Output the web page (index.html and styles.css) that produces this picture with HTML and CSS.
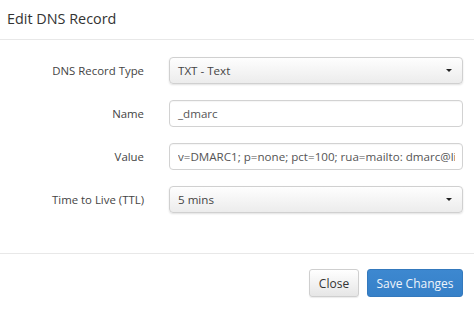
FILE: index.html
```html
<!DOCTYPE html>
<html>
<head>
<meta charset="utf-8">
<link rel="stylesheet" href="styles.css">
</head>
<body>
<div class="modal">
  <div class="modal-header">
    <h4 class="modal-title">Edit DNS Record</h4>
  </div>
  <div class="modal-body">
    <div class="form-row">
      <label class="label">DNS Record Type</label>
      <div class="control select"><span>TXT - Text</span><span class="caret"></span></div>
    </div>
    <div class="form-row">
      <label class="label">Name</label>
      <div class="control input"><span>_dmarc</span></div>
    </div>
    <div class="form-row">
      <label class="label">Value</label>
      <div class="control input"><span class="clip">v=DMARC1; p=none; pct=100; rua=mailto: dmarc@li</span></div>
    </div>
    <div class="form-row">
      <label class="label">Time to Live (TTL)</label>
      <div class="control select"><span>5 mins</span><span class="caret"></span></div>
    </div>
  </div>
  <div class="modal-footer">
    <button class="btn btn-default">Close</button>
    <button class="btn btn-primary">Save Changes</button>
  </div>
</div>
</body>
</html>
```

FILE: styles.css
```css
html, body {
  margin: 0;
  padding: 0;
  background: #fff;
}
body {
  font-family: "Open Sans", "DejaVu Sans", sans-serif;
  color: #444;
  width: 474px;
  height: 309px;
  overflow: hidden;
}
.modal-header {
  height: 40px;
  box-sizing: border-box;
  border-bottom: 1px solid #e8e8e8;
  padding: 0 7px;
  display: flex;
  align-items: center;
}
.modal-title {
  margin: 0;
  font-size: 14.4px;
  font-weight: 400;
  color: #333;
  position: relative;
  top: -1px;
}
.modal-body {
  padding: 17px 11px 40px 0;
  display: flex;
  flex-direction: column;
  gap: 16px;
}
.form-row {
  display: flex;
  align-items: center;
  gap: 25px;
}
.label {
  width: 144px;
  text-align: right;
  font-size: 11.4px;
  color: #444;
}
.control {
  flex: 1;
  min-width: 0;
  height: 27px;
  box-sizing: border-box;
  border: 1px solid #d2d2d2;
  border-radius: 4px;
  display: flex;
  align-items: center;
  padding: 0 7px 0 8px;
  font-size: 11.6px;
  color: #555;
  overflow: hidden;
  white-space: nowrap;
}
.input {
  background: #fff;
  box-shadow: inset 0 1px 1px rgba(0,0,0,0.04);
}
.select {
  background: linear-gradient(#fefefe, #ececec);
  border-color: #d0d0d0;
  box-shadow: 0 1px 2px rgba(0,0,0,0.12);
  justify-content: space-between;
  color: #444;
}
.caret {
  width: 0;
  height: 0;
  border-left: 3px solid transparent;
  border-right: 3px solid transparent;
  border-top: 3px solid #222;
  margin-right: 3px;
}
.clip {
  overflow: hidden;
}
.modal-footer {
  border-top: 1px solid #e8e8e8;
  padding: 15px 11px 0 0;
  display: flex;
  justify-content: flex-end;
  gap: 8px;
}
.btn {
  height: 28px;
  box-sizing: border-box;
  font-family: "Open Sans", "DejaVu Sans", sans-serif;
  font-size: 12px;
  border-radius: 3px;
  padding: 0;
  white-space: nowrap;
  cursor: pointer;
}
.btn-default {
  width: 50px;
  background: linear-gradient(#ffffff, #e6e6e6);
  border: 1px solid #cfcfcf;
  color: #333;
  box-shadow: 0 1px 1px rgba(0,0,0,0.08);
}
.btn-primary {
  width: 96px;
  background: linear-gradient(#3d88d0, #3680c8);
  border: 1px solid #3479bd;
  color: #eef4fb;
}
```
